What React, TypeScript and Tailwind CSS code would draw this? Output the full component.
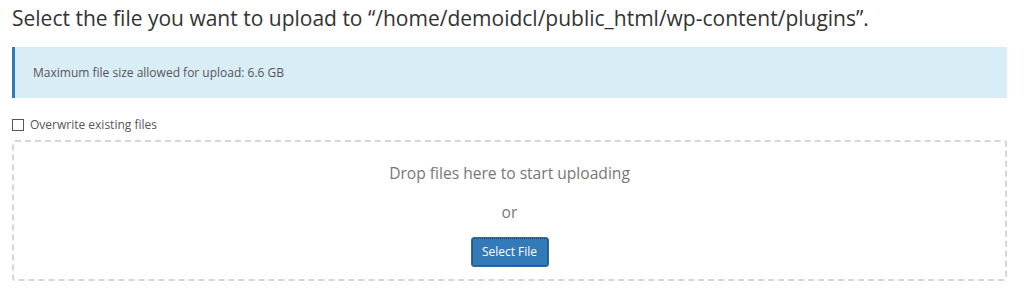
export default function App() {
  return (
    <div
      className="w-[1024px] h-[306px] bg-white pl-3 pr-[17px] text-[#333]"
      style={{ fontFamily: '"Open Sans", "Liberation Sans", sans-serif' }}
    >
      {/* Title */}
      <h1 className="pt-[4px] text-[21px] leading-[29px] font-normal text-[#333]">
        Select the file you want to upload to “/home/demoidcl/public_html/wp-content/plugins”.
      </h1>

      {/* Info alert */}
      <div className="mt-[14px] h-[51px] flex items-center bg-[#d9edf7] border-l-[3px] border-[#337ab7] pl-[18px] text-[12px] text-[#555]">
        Maximum file size allowed for upload: 6.6 GB
      </div>

      {/* Overwrite checkbox */}
      <label className="mt-[19px] flex items-center gap-[6px] text-[12px] text-[#555] leading-[16px]">
        <span className="w-[12px] h-[12px] border border-[#555] bg-white" />
        Overwrite existing files
      </label>

      {/* Drop zone */}
      <div className="mt-[7px] h-[141px] border-2 border-dashed border-[#d6d6d6] rounded-[3px] flex flex-col items-center">
        <p className="mt-[19px] text-[15.6px] leading-[24px] text-[#777]">
          Drop files here to start uploading
        </p>
        <p className="mt-[15px] text-[15.6px] leading-[24px] text-[#777]">or</p>
        <button
          type="button"
          className="mt-[13px] w-[78px] h-[30px] bg-[#337ab7] border border-[#2e6da4] rounded-[3px] text-white text-[12px] outline outline-1 outline-dotted outline-[#1a3e63] -outline-offset-2"
        >
          Select File
        </button>
      </div>
    </div>
  );
}
